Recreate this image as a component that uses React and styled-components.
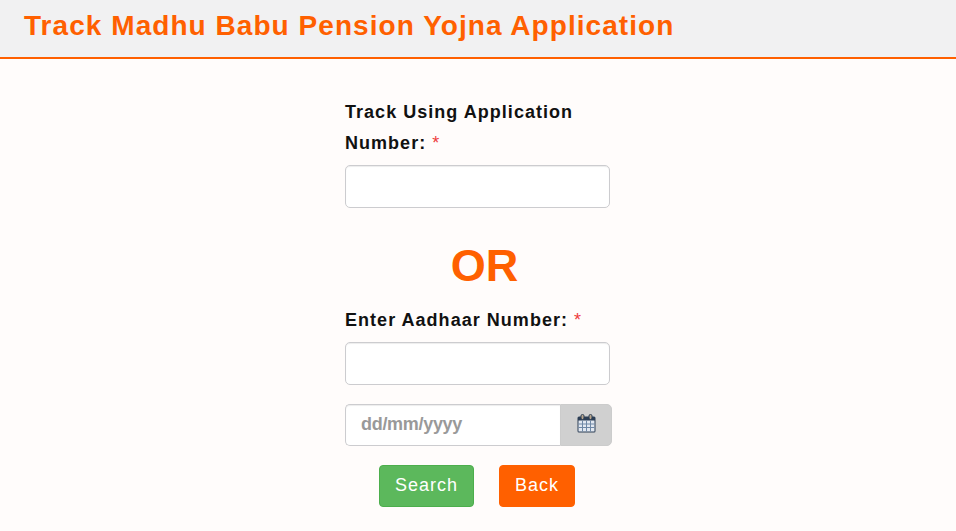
import React from "react";
import styled, { createGlobalStyle } from "styled-components";

const Global = createGlobalStyle`
  html, body { margin: 0; padding: 0; background: #fffcfb; }
  body { font-family: "Liberation Sans", Arial, sans-serif; overflow: hidden; }
  * { box-sizing: border-box; }
`;

const Page = styled.div`
  width: 956px;
  height: 531px;
  overflow: hidden;
  background: #fffcfb;
`;

const Header = styled.header`
  height: 59px;
  background: #f1f1f2;
  border-bottom: 2px solid #ff6000;
  padding: 10px 24px 0;
`;

const Title = styled.h1`
  margin: 0;
  font-size: 28px;
  line-height: 32px;
  font-weight: 700;
  letter-spacing: 1.05px;
  color: #ff6000;
`;

const Form = styled.form`
  width: 267px;
  margin-left: 345px;
  padding-top: 38px;
`;

const Label = styled.label`
  display: block;
  max-width: 240px;
  font-size: 18px;
  line-height: 31px;
  font-weight: 700;
  letter-spacing: 1.03px;
  color: #111;
`;

const Star = styled.span`
  color: #ee3b3b;
  font-weight: 400;
`;

const Input = styled.input`
  display: block;
  width: 265px;
  height: 43px;
  margin-top: 6px;
  padding: 6px 16px;
  background: #fff;
  border: 1px solid #cccccf;
  border-radius: 5px;
  box-shadow: inset 0 1px 1px rgba(0, 0, 0, 0.075);
  outline: none;
`;

const Or = styled.div`
  width: 265px;
  margin: 33px 0 14px;
  padding-left: 14px;
  text-align: center;
  font-size: 45px;
  line-height: 50px;
  font-weight: 700;
  color: #ff6000;
`;

const DateGroup = styled.div`
  display: flex;
  width: 267px;
  height: 42px;
  margin-top: 19px;
`;

const DateInput = styled.div`
  flex: 1;
  padding-left: 15px;
  font-size: 18px;
  font-weight: 700;
  letter-spacing: -0.3px;
  line-height: 39px;
  color: #999;
  background: #fff;
  border: 1px solid #cccccf;
  border-right: none;
  border-radius: 5px 0 0 5px;
  box-shadow: inset 0 1px 1px rgba(0, 0, 0, 0.075);
`;

const Addon = styled.div`
  display: flex;
  align-items: center;
  justify-content: center;
  width: 52px;
  padding-bottom: 4px;
  background: #d0d0d0;
  border: 1px solid #ccc;
  border-radius: 0 5px 5px 0;
`;

const Actions = styled.div`
  display: flex;
  gap: 25px;
  margin-top: 19px;
  padding-left: 34px;
`;

const Button = styled.button`
  height: 42px;
  width: ${(p) => p.$w}px;
  padding: 0 0 2px;
  font-family: inherit;
  font-size: 18px;
  letter-spacing: 1px;
  color: #fff;
  background: ${(p) => p.$bg};
  border: 1px solid ${(p) => p.$border};
  border-radius: 4px;
`;

const CalendarIcon = () => (
  <svg width="19" height="19" viewBox="0 0 19 19">
    <rect x="0.5" y="2.5" width="18" height="16" rx="1.5" fill="#2c3e55" />
    <rect x="1.5" y="6.5" width="16" height="11" fill="#e2e8f1" />
    <path d="M1.5 10h16M1.5 13.5h16M5.5 6.5v11M9.5 6.5v11M13.5 6.5v11" stroke="#6f88a6" strokeWidth="1" />
    <rect x="4" y="0.5" width="3" height="5" rx="1.4" fill="#b9a68e" stroke="#2c3e55" />
    <rect x="12" y="0.5" width="3" height="5" rx="1.4" fill="#b9a68e" stroke="#2c3e55" />
  </svg>
);

export default function App() {
  return (
    <Page>
      <Global />
      <Header>
        <Title>Track Madhu Babu Pension Yojna Application</Title>
      </Header>
      <Form>
        <Label>
          Track Using Application Number: <Star>*</Star>
        </Label>
        <Input />
        <Or>OR</Or>
        <Label>
          Enter Aadhaar Number: <Star>*</Star>
        </Label>
        <Input />
        <DateGroup>
          <DateInput>dd/mm/yyyy</DateInput>
          <Addon>
            <CalendarIcon />
          </Addon>
        </DateGroup>
        <Actions>
          <Button type="button" $w={95} $bg="#5cb85c" $border="#4cae4c">Search</Button>
          <Button type="button" $w={76} $bg="#ff6000" $border="#ff6000">Back</Button>
        </Actions>
      </Form>
    </Page>
  );
}
